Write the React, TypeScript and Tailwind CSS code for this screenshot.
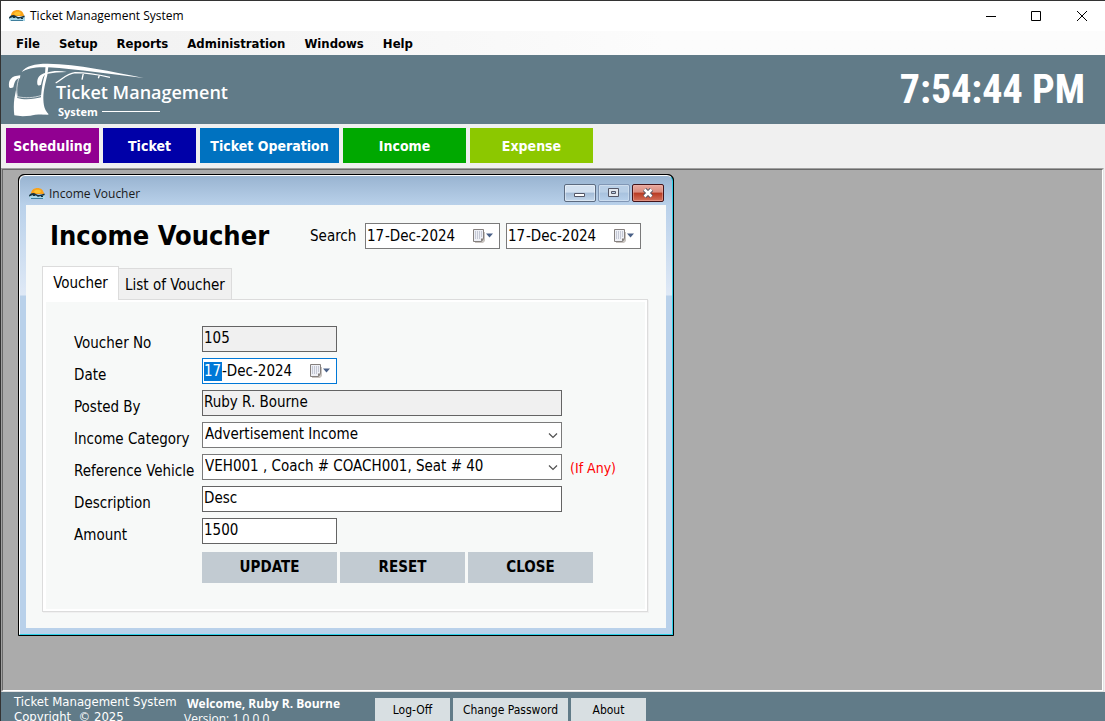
import React from 'react';
import clsx from 'clsx';

const tahoma = "font-['DejaVu_Sans_Condensed','DejaVu_Sans',sans-serif]";
const segoe = "font-['Open_Sans','Noto_Sans',sans-serif]";

const menuItems = ['File', 'Setup', 'Reports', 'Administration', 'Windows', 'Help'];

const toolbarItems = [
  { label: 'Scheduling', className: 'w-[93px] bg-[#910091]' },
  { label: 'Ticket', className: 'w-[93px] bg-[#0000a8]' },
  { label: 'Ticket Operation', className: 'w-[139px] bg-[#0072c0]' },
  { label: 'Income', className: 'w-[123px] bg-[#00a800]' },
  { label: 'Expense', className: 'w-[123px] bg-[#8cc800]' },
];

const SunIcon: React.FC<{ className?: string }> = ({ className }) => (
  <svg className={className} width="16" height="16" viewBox="0 0 16 16" aria-hidden="true">
    <path d="M2 8C2 4 5 2 8.500 2S14.500 4 15 8Z" fill="#f9a21b" />
    <path d="M5 5.500C6 3.500 10 3 12 5L11 7H6Z" fill="#fdc42f" />
    <path d="M0 9.500C2 6.500 5 6.500 7 8S12 9 15.500 7.500L16 11H0Z" fill="#16323f" />
    <path d="M0 10.500C4 8.500 6 9 8 10S13 10 16 9V13H1Z" fill="#a9d8ea" />
    <path d="M4 9.500h2M8 10h2M12 10.500h2" stroke="#16323f" />
    <path d="M2 12.500h12" stroke="#3f7f9d" />
  </svg>
);

const BusLogo: React.FC = () => (
  <svg className="h-[60px] w-[150px]" viewBox="0 0 450 180" fill="#fff" aria-hidden="true">
    <path d="M50 36C62 18 88 11 128 11C220 13 320 34 416 54C320 44 220 27 128 22C90 20 66 26 50 36Z" />
    <path d="M12 80C10 60 18 48 46 46L45 55C32 57 29 64 25 82C18 86 13 84 12 80Z" />
    <path d="M97 72C95 52 104 42 124 38C144 32 164 32 186 36C164 37 142 38 124 42C114 46 112 58 108 74C103 78 98 77 97 72Z" />
    <path d="M122 12H131L127 45C120 72 116 90 115 112C115 135 118 150 131 163H112C107 145 107 130 108 108C110 85 114 60 120 42Z" />
    <path d="M33 90L37 114C60 121 90 117 112 111V150L131 164C104 162 88 164 76 167C60 169 40 169 28 166C26 150 26 130 28 116Z" />
    <path d="M41 56C35 76 34 92 37 110C60 115 86 114 110 106" fill="none" stroke="#fff" strokeWidth="2" />
    <path
      d="M152 69C174 56 184 42 210 38C244 38 280 44 315 52M235 40L231 59M283 46L280 55"
      fill="none"
      stroke="#fff"
      strokeWidth="4"
    />
  </svg>
);

const CalendarIcon: React.FC = () => (
  <svg width="22" height="14" viewBox="0 0 22 14" aria-hidden="true">
    <path d="M2 3h10v9l-2 2H2z" fill="#c9c4c0" />
    <path d="M.5 .5h10v9l-2 3h-8z" fill="#eef0f6" stroke="#85807e" />
    <path d="M2 3h7M2 5h7M2 7h7M2 9h6" stroke="#9aa0b4" strokeDasharray="1 1" />
    <path d="M8 12.500v-3h3z" fill="#85807e" />
    <path d="M13 4.500h7l-3.500 4z" fill="#4a6087" />
  </svg>
);

interface DateFieldProps {
  id: string;
  label?: string;
  active?: boolean;
}

const DateField: React.FC<DateFieldProps> = ({ id, label, active }) => (
  <div
    className={clsx(
      'flex h-[26px] w-[135px] shrink-0 items-center border bg-white pl-px pr-1 text-[15px]',
      active ? 'border-[#0078d7]' : 'border-[#7a7a7a]'
    )}
  >
    <input
      id={id}
      aria-label={label}
      defaultValue="17"
      className={clsx('h-[19px] w-[18px] outline-none', active && 'bg-[#0078d7] text-white')}
    />
    <input
      aria-label="Month and year"
      defaultValue="-Dec-2024"
      className="min-w-0 flex-1 outline-none"
    />
    <button type="button" aria-label="Open calendar">
      <CalendarIcon />
    </button>
  </div>
);

interface RowProps {
  id: string;
  label: string;
  children: React.ReactNode;
}

const Row: React.FC<RowProps> = ({ id, label, children }) => (
  <div className="flex">
    <label htmlFor={id} className="w-32 shrink-0 pt-2 leading-[18px]">
      {label}
    </label>
    {children}
  </div>
);

interface TextFieldProps {
  id: string;
  value: string;
  wide?: boolean;
  readOnly?: boolean;
}

const TextField: React.FC<TextFieldProps> = ({ id, value, wide, readOnly }) => (
  <input
    id={id}
    defaultValue={value}
    readOnly={readOnly}
    className={clsx(
      'h-[26px] border border-[#646464] pb-[3px] pl-px outline-none',
      wide ? 'w-[360px]' : 'w-[135px]',
      readOnly ? 'bg-[#f0f0f0]' : 'bg-white'
    )}
  />
);

const SelectField: React.FC<{ id: string; value: string }> = ({ id, value }) => (
  <div className="relative w-[360px]">
    <select
      id={id}
      className="block h-[26px] w-full appearance-none border border-[#7a7a7a] bg-white pb-px pl-0.5 outline-none"
    >
      <option>{value}</option>
    </select>
    <svg
      className="pointer-events-none absolute right-1 top-2.5"
      width="10"
      height="7"
      viewBox="0 0 10 7"
      aria-hidden="true"
    >
      <path d="M1 1.500l4 4 4-4" fill="none" stroke="#505050" strokeWidth="1.200" />
    </svg>
  </div>
);

const VoucherWindow: React.FC = () => (
  <section className="absolute left-4 top-[5px] w-[656px] rounded-t-md border border-black bg-black">
    <div className="rounded-t-md border border-b-[#2cd0e8] border-l-white border-r-[#2cd0e8] border-t-white bg-[linear-gradient(#99b4d1_0px,#b9d1ea_29px,#dfe9f6_119px,#b9d1ea_120px)] px-1.5 pb-1.5">
      <header className={clsx('flex h-[29px] items-center gap-0.5 pl-[3px] pr-0.5 text-xs', segoe)}>
        <SunIcon className="mt-1.5" />
        <h2 className="flex-1 pl-0.5 pt-1.5 text-[#1a1a1a]">Income Voucher</h2>
        <button
          type="button"
          aria-label="Minimize"
          className="mt-1 flex h-[18px] w-8 items-center justify-center rounded-[2px] border border-[#5c6b80] bg-[linear-gradient(#d3e1f0_45%,#a3bbd6_50%,#c4d8ec)] shadow-[inset_0_0_0_1px_#ffffff66]"
        >
          <svg width="12" height="6" viewBox="0 0 12 6" className="mt-1">
            <path d="M.5 1.500h10v3h-10z" fill="#fff" stroke="#535666" />
          </svg>
        </button>
        <button
          type="button"
          aria-label="Maximize"
          className="mt-1 flex h-[18px] w-8 items-center justify-center rounded-[2px] border border-[#8197b5] bg-[linear-gradient(#b9cfe6_45%,#a8c2de_50%,#b7d0ea)] shadow-[inset_0_0_0_1px_#ffffff4d]"
        >
          <svg width="12" height="10" viewBox="0 0 12 10">
            <path d="M.5 .5h10v8h-10z" fill="#e4e9ef" stroke="#535666" />
            <path d="M3.500 3.500h4v2h-4z" fill="#b9cfe6" stroke="#535666" />
          </svg>
        </button>
        <button
          type="button"
          aria-label="Close window"
          className="mt-1 flex h-[18px] w-8 items-center justify-center rounded-[2px] border border-[#43141a] bg-[linear-gradient(#e9a99f_0%,#d98b7e_45%,#b83a22_50%,#d4715c)] shadow-[inset_0_0_0_1px_#f0b6ab80]"
        >
          <svg width="12" height="10" viewBox="0 0 12 10">
            <path d="M2.500 1.500l7 7M9.500 1.500l-7 7" stroke="#535666" strokeWidth="4.500" />
            <path d="M2.500 1.500l7 7M9.500 1.500l-7 7" stroke="#fff" strokeWidth="2.500" />
          </svg>
        </button>
      </header>

      <div className="bg-[#f7f9f8] px-4 pb-4 pt-[17px]">
        <div className="flex items-center pl-2">
          <h1 className="w-[260px] text-[27px] font-bold leading-7">Income Voucher</h1>
          <label htmlFor="search-from" className="w-[55px] text-[15px]">
            Search
          </label>
          <div className="flex gap-1.5">
            <DateField id="search-from" />
            <DateField id="search-to" label="Search to" />
          </div>
        </div>

        <div role="tablist" className="mt-4 flex items-end text-[15px]">
          <button
            type="button"
            role="tab"
            aria-selected="true"
            className="relative z-10 -mb-px h-[34px] w-[77px] border border-b-0 border-[#dcdcdc] bg-white"
          >
            Voucher
          </button>
          <button
            type="button"
            role="tab"
            aria-selected="false"
            className="h-[31px] w-[113px] border border-b-0 border-l-0 border-[#dcdcdc] bg-[#f0f0f0] pt-0.5"
          >
            List of Voucher
          </button>
        </div>

        <div
          role="tabpanel"
          className="mr-0.5 border border-[#dcdcdc] bg-white p-0.5 pl-[3px] shadow-[1px_1px_0_#f0f0f0]"
        >
          <form className="bg-[#f7f9f8] pb-[26px] pl-7 pt-6 text-[15px]" onSubmit={(e) => e.preventDefault()}>
            <div className="flex flex-col gap-1.5">
              <Row id="voucher-no" label="Voucher No">
                <TextField id="voucher-no" value="105" readOnly />
              </Row>
              <Row id="date" label="Date">
                <DateField id="date" active />
              </Row>
              <Row id="posted-by" label="Posted By">
                <TextField id="posted-by" value="Ruby R. Bourne" wide readOnly />
              </Row>
              <Row id="category" label="Income Category">
                <SelectField id="category" value="Advertisement Income" />
              </Row>
              <Row id="vehicle" label="Reference Vehicle">
                <SelectField id="vehicle" value="VEH001 , Coach # COACH001, Seat # 40" />
                <span className="pl-2 pt-1 text-sm text-[#f00]">(If Any)</span>
              </Row>
              <Row id="description" label="Description">
                <TextField id="description" value="Desc" wide />
              </Row>
              <Row id="amount" label="Amount">
                <TextField id="amount" value="1500" />
              </Row>
            </div>
            <div className="ml-32 mt-2 flex gap-[3px] font-bold">
              <button type="submit" className="h-[31px] w-[135px] bg-[#c2cbd2]">
                UPDATE
              </button>
              <button type="reset" className="h-[31px] w-[125px] bg-[#c2cbd2]">
                RESET
              </button>
              <button type="button" className="h-[31px] w-[125px] bg-[#c2cbd2]">
                CLOSE
              </button>
            </div>
          </form>
        </div>
      </div>
    </div>
  </section>
);

const App: React.FC = () => {
  return (
    <div
      className={clsx(
        'flex h-screen flex-col overflow-hidden border-l border-t border-[#333] bg-[#f0f0f0] text-black',
        tahoma
      )}
    >
      <header className={clsx('flex h-[30px] shrink-0 items-center bg-white pl-2 text-xs', segoe)}>
        <SunIcon />
        <span className="flex-1 pl-[5px]">Ticket Management System</span>
        <button type="button" aria-label="Minimize" className="flex h-full w-[45px] items-center justify-center">
          <svg width="10" height="10" viewBox="0 0 10 10">
            <path d="M0 5.500h10" stroke="#000" />
          </svg>
        </button>
        <button type="button" aria-label="Maximize" className="flex h-full w-[45px] items-center justify-center">
          <svg width="10" height="10" viewBox="0 0 10 10">
            <path d="M.5 .5h9v9h-9z" fill="none" stroke="#000" />
          </svg>
        </button>
        <button type="button" aria-label="Close" className="flex h-full w-[47px] items-center justify-center">
          <svg width="10" height="10" viewBox="0 0 10 10">
            <path d="M0 0l10 10M10 0L0 10" stroke="#000" />
          </svg>
        </button>
      </header>

      <nav className="flex h-6 shrink-0 items-center gap-[19px] bg-linear-to-r from-[#f0f0f0] to-[#fcfcfc] to-60% pl-[15px] pt-0.5 text-[13px] font-bold">
        {menuItems.map((item) => (
          <button key={item} type="button">
            {item}
          </button>
        ))}
      </nav>

      <div className="flex h-[69px] shrink-0 items-center justify-between bg-[#617b88] pl-1 pr-5 text-white">
        <div className="relative">
          <BusLogo />
          <div className={clsx('absolute left-[51px] top-5 whitespace-nowrap', segoe)}>
            <div className="text-lg font-semibold leading-6">Ticket Management</div>
            <div className="flex items-center gap-1 pl-0.5 text-[11px] font-bold leading-4">
              System
              <span className="h-px w-[58px] bg-white" />
            </div>
          </div>
        </div>
        <time className="font-['Liberation_Sans_Narrow','Roboto_Condensed',sans-serif] text-[40px] font-bold">
          7:54:44 PM
        </time>
      </div>

      <div className="flex h-11 shrink-0 gap-1 pl-[5px] pt-1">
        {toolbarItems.map((item) => (
          <button
            key={item.label}
            type="button"
            className={clsx('h-[35px] whitespace-nowrap text-sm font-bold text-white', item.className)}
          >
            {item.label}
          </button>
        ))}
      </div>

      <main className="relative mr-px flex-1 border border-b-[#e3e3e3] border-l-[#a0a0a0] border-r-[#e3e3e3] border-t-[#a0a0a0]">
        <div className="h-full border border-b-white border-l-[#696969] border-r-white border-t-[#696969] bg-[#ababab]" />
        <VoucherWindow />
      </main>

      <footer className="flex h-[29px] shrink-0 overflow-hidden bg-[#617b88] text-white">
        <div className="w-[172px] whitespace-nowrap pl-[13px] pt-0.5 text-[13px] leading-[15px]">
          <p>Ticket Management System</p>
          <p>Copyright &nbsp;© 2025</p>
        </div>
        <div className={clsx('w-[202px] pl-[11px] pt-1 text-xs leading-[15px]', segoe)}>
          <p className="pl-[3px] font-bold">Welcome, Ruby R. Bourne</p>
          <p>Version: 1.0.0.0</p>
        </div>
        <div className="mt-1.5 flex gap-[3px] text-xs text-black">
          <button type="button" className="h-6 w-[75px] bg-[#d8dfe2]">
            Log-Off
          </button>
          <button type="button" className="h-6 w-[115px] bg-[#d8dfe2]">
            Change Password
          </button>
          <button type="button" className="h-6 w-[75px] bg-[#d8dfe2]">
            About
          </button>
        </div>
      </footer>
    </div>
  );
};

export default App;
